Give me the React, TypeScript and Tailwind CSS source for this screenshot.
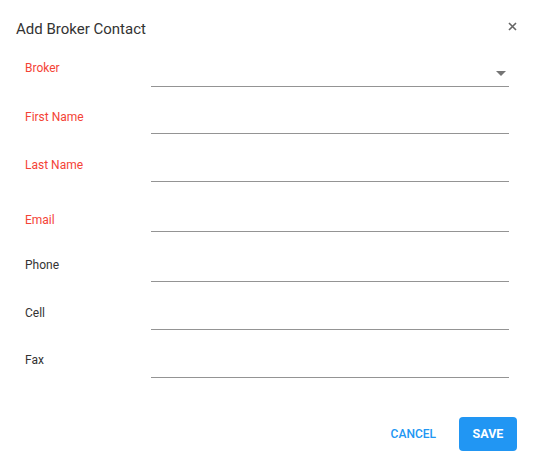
import React from "react";

type Field = { label: string; required: boolean; h: string; mb: string; select?: boolean };

const fields: Field[] = [
  { label: "Broker", required: true, h: "h-[37px]", mb: "mb-[12px]", select: true },
  { label: "First Name", required: true, h: "h-[47px]", mb: "mb-[10px]" },
  { label: "Last Name", required: true, h: "h-[48px]", mb: "mb-[10px]" },
  { label: "Email", required: true, h: "h-[50px]", mb: "mb-[5px]" },
  { label: "Phone", required: false, h: "h-[50px]", mb: "mb-[10px]" },
  { label: "Cell", required: false, h: "h-[48px]", mb: "mb-[10px]" },
  { label: "Fax", required: false, h: "h-[48px]", mb: "mb-[11px]" },
];

export default function App() {
  return (
    <div className="w-[535px] h-[470px] bg-white font-['Roboto',sans-serif] flex flex-col">
      <div className="flex items-start justify-between h-[50px] pl-4 pr-[18px] pt-[19px]">
        <div className="text-[15px] leading-5 text-[#333333]">Add Broker Contact</div>
        <svg width="9" height="9" viewBox="0 0 9 9" className="mt-[3px]">
          <path d="M1 1L8 8M8 1L1 8" stroke="#666666" strokeWidth="1.6" />
        </svg>
      </div>
      <div className="flex flex-col pl-[25px] pr-[26px]">
        {fields.map((f) => (
          <div key={f.label} className={`flex items-end ${f.h}`}>
            <div
              className={`w-[126px] shrink-0 text-[12px] leading-[14px] ${f.mb} ${
                f.required ? "text-[#f44336]" : "text-[#333333]"
              }`}
            >
              {f.label}
            </div>
            <div className="flex-1 h-[30px] border-b border-[#949494] flex items-center justify-end">
              {f.select && (
                <svg width="12" height="6" viewBox="0 0 12 6" className="mr-[2px] mt-[5px]">
                  <path d="M1 0H11L6 5Z" fill="#757575" />
                </svg>
              )}
            </div>
          </div>
        ))}
      </div>
      <div className="flex justify-end items-center pr-[18px] mt-[39px]">
        <button className="h-[34px] px-[8px] mr-[15px] text-[12px] font-medium text-[#2196f3] uppercase">
          Cancel
        </button>
        <button className="h-[34px] w-[58px] rounded-[4px] bg-[#2196f3] text-white text-[12.5px] font-bold uppercase">
          Save
        </button>
      </div>
    </div>
  );
}
